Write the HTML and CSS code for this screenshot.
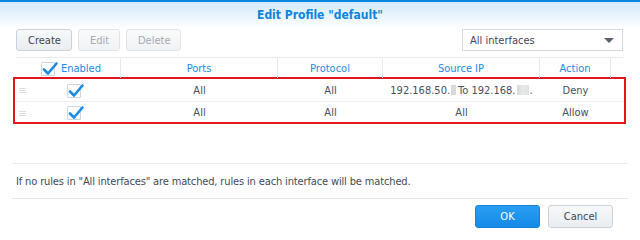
FILE: index.html
```html
<!DOCTYPE html>
<html>
<head>
<meta charset="utf-8">
<link rel="stylesheet" href="styles.css">
</head>
<body>
<div class="dialog">
  <div class="topbar"></div>
  <div class="header"><span class="title">Edit Profile "default"</span></div>
  <div class="toolbar">
    <button class="btn">Create</button>
    <button class="btn disabled">Edit</button>
    <button class="btn disabled">Delete</button>
    <div class="spacer"></div>
    <div class="select"><span>All interfaces</span><span class="arrow"></span></div>
  </div>
  <div class="table">
    <div class="thead">
      <div class="th th-enabled"><span class="cb cb-head"><svg viewBox="0 0 18 16" width="18" height="16"><path d="M3 8.5 L7 12.5 L15.5 2.5" fill="none" stroke="#1a8ce6" stroke-width="2.6" stroke-linecap="round" stroke-linejoin="round"/></svg></span>Enabled</div>
      <div class="th">Ports</div>
      <div class="th">Protocol</div>
      <div class="th">Source IP</div>
      <div class="th">Action</div>
      <div class="th th-last"></div>
    </div>
    <div class="rows">
      <div class="row">
        <div class="td td-enabled"><span class="handle"></span><span class="cb"><svg viewBox="0 0 18 16" width="18" height="16"><path d="M3 8.5 L7 12.5 L15.5 2.5" fill="none" stroke="#1a8ce6" stroke-width="2.6" stroke-linecap="round" stroke-linejoin="round"/></svg></span></div>
        <div class="td">All</div>
        <div class="td">All</div>
        <div class="td">192.168.50.<span class="blur b1"></span> To 192.168.<span class="blur b2"></span>.</div>
        <div class="td">Deny</div>
        <div class="td"></div>
      </div>
      <div class="row">
        <div class="td td-enabled"><span class="handle"></span><span class="cb"><svg viewBox="0 0 18 16" width="18" height="16"><path d="M3 8.5 L7 12.5 L15.5 2.5" fill="none" stroke="#1a8ce6" stroke-width="2.6" stroke-linecap="round" stroke-linejoin="round"/></svg></span></div>
        <div class="td">All</div>
        <div class="td">All</div>
        <div class="td">All</div>
        <div class="td">Allow</div>
        <div class="td"></div>
      </div>
    </div>
  </div>
  <div class="notice">If no rules in "All interfaces" are matched, rules in each interface will be matched.</div>
  <div class="footer">
    <button class="fbtn ok">OK</button>
    <button class="fbtn cancel">Cancel</button>
  </div>
</div>
</body>
</html>
```
FILE: styles.css
```css
* { box-sizing: border-box; }
html, body { margin: 0; padding: 0; background: #fff; }
body { width: 640px; height: 240px; overflow: hidden; font-family: "DejaVu Sans Condensed", "DejaVu Sans", sans-serif; font-size: 11px; color: #414b55; }
.dialog { width: 640px; height: 240px; display: flex; flex-direction: column; }
.topbar { height: 2px; background: #0b86e3; }
.header { height: 27px; background: linear-gradient(#d3e9fb, #ffffff); display: flex; justify-content: center; align-items: center; padding-bottom: 2px; }
.title { color: #0a86e0; font-weight: bold; font-size: 12px; }
.toolbar { display: flex; align-items: center; padding: 0 17px 0 16px; gap: 6px; height: 22px; }
.btn { height: 22px; padding: 0 11px; border: 1px solid #c9d1da; border-radius: 3px; background: linear-gradient(#f7f9fb, #e9edf1); font-family: inherit; font-size: 11px; color: #3e4750; }
.btn:first-child { width: 56px; }
.btn.disabled { color: #a3abb3; border-color: #dfe4e9; background: linear-gradient(#f9fafb, #f0f2f5); }
.btn.disabled:nth-child(2) { width: 42px; }
.btn.disabled:nth-child(3) { width: 55px; }
.spacer { flex: 1; }
.select { width: 161px; height: 22px; border: 1px solid #d3dae1; display: flex; align-items: center; justify-content: space-between; padding: 0 8px 0 7px; color: #3e4750; background: #fff; }
.arrow { width: 0; height: 0; border-left: 5px solid transparent; border-right: 5px solid transparent; border-top: 5px solid #58616a; margin-top: 1px; }
.table { margin: 6px 16px 0 16px; }
.thead { display: grid; grid-template-columns: 105px 157px 105px 157px 71px 13px; height: 21px; border-top: 1px solid #e6ebf0; }
.th { display: flex; align-items: center; justify-content: center; color: #1a8ae2; border-right: 1px solid #e6ebf0; }
.th.th-last { border-right: 0; }
.th-enabled { justify-content: flex-start; padding-left: 25px; gap: 6px; }
.cb { position: relative; display: inline-block; width: 14px; height: 14px; border: 1px solid #cfd6dd; background: #fff; border-radius: 1px; }
.cb svg { position: absolute; left: -1px; top: -2px; }
.cb-head { margin-top: 2px; }
.rows { margin: -1px -2px 0 -3px; border: 2px solid #e3141d; padding-left: 1px; }
.row { display: grid; grid-template-columns: 105px 157px 105px 157px 71px 13px; height: 22px; }
.row + .row { border-top: 1px solid #eef0f2; height: 21px; }
.td { display: flex; align-items: center; justify-content: center; color: #47505a; white-space: nowrap; }
.td-enabled { position: relative; }
.td-enabled .cb { margin-left: 10px; margin-top: 2px; }
.handle { position: absolute; left: 3px; top: 9px; width: 7px; height: 5px; border-top: 1px solid #dcdfe2; border-bottom: 1px solid #dcdfe2; }
.handle::after { content: ""; position: absolute; left: 0; right: 0; top: 1px; border-top: 1px solid #dcdfe2; }
.blur { display: inline-block; height: 10px; background: #d8dadc; vertical-align: middle; margin-top: -1px; }
.b1 { width: 5px; margin: 0 2px 0 1px; }
.b2 { width: 12px; background: linear-gradient(90deg, #d6d8da, #e8e9ea, #dfe0e2); margin: 0 1px 0 1px; }
.notice { margin: 39px 12px 0 12px; border-top: 1px solid #eceff2; border-bottom: 1px solid #e3e7eb; height: 36px; padding-left: 4px; display: flex; align-items: center; color: #414b55; letter-spacing: -0.14px; }
.footer { display: flex; justify-content: flex-end; gap: 8px; padding: 6px 27px 0 0; }
.fbtn { height: 23px; width: 65px; border-radius: 3px; font-family: inherit; font-size: 11px; }
.ok { background: linear-gradient(#2a9ef2, #148ae8); border: 1px solid #1481da; color: #fff; }
.cancel { background: linear-gradient(#f7f9fb, #e9edf1); border: 1px solid #c9d1da; color: #3e4750; }
```
